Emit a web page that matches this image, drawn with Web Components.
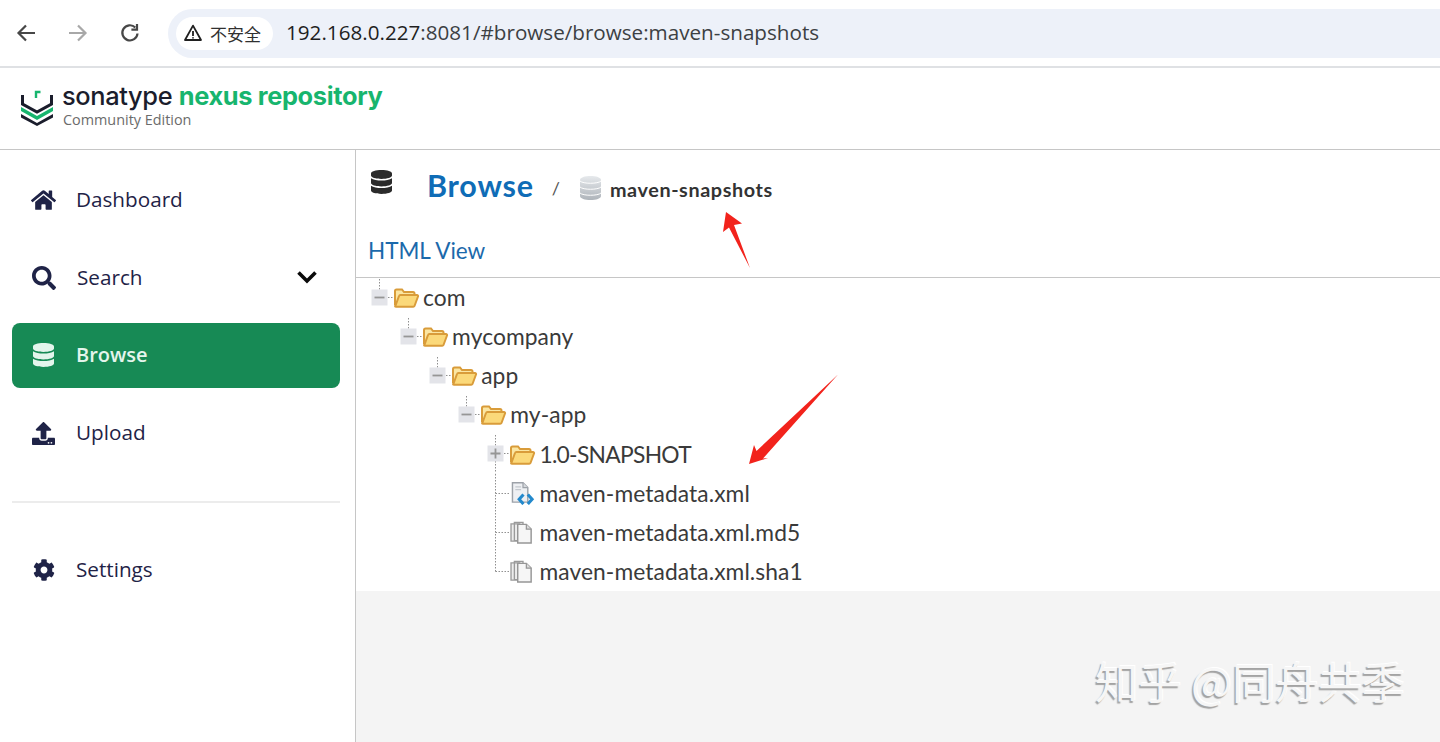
<!DOCTYPE html>
<html lang="zh">
<head>
<meta charset="utf-8">
<title>Nexus Repository</title>
<style>
  html, body { margin: 0; height: 742px; overflow: hidden; background: #fff; }
  app-shell { height: 742px; }
</style>
</head>
<body>
<app-shell>
  <browser-bar slot="top" url-host="192.168.0.227" url-rest=":8081/#browse/browse:maven-snapshots"></browser-bar>
  <app-header slot="top"></app-header>
  <side-nav slot="side">
    <nav-item icon="home" style="--ix:31px;--iw:25px">Dashboard</nav-item>
    <nav-item icon="search" caret style="--ix:32px;--iw:24px;--tx:77px">Search</nav-item>
    <nav-item icon="database" active style="--ix:33px;--iw:21px">Browse</nav-item>
    <nav-item icon="upload" style="--ix:32px;--iw:23px">Upload</nav-item>
    <hr-line></hr-line>
    <nav-item icon="cog" style="--ix:33px;--iw:22px">Settings</nav-item>
  </side-nav>
  <browse-pane slot="main">
    <browse-head repo="maven-snapshots"></browse-head>
    <tree-view>
      <tree-row level="0" kind="open">com</tree-row>
      <tree-row level="1" kind="open">mycompany</tree-row>
      <tree-row level="2" kind="open">app</tree-row>
      <tree-row level="3" kind="open">my-app</tree-row>
      <tree-row level="4" kind="closed" style="letter-spacing:-0.7px">1.0-SNAPSHOT</tree-row>
      <tree-row level="4" kind="leaf" file="xml">maven-metadata.xml</tree-row>
      <tree-row level="4" kind="leaf" file="hash">maven-metadata.xml.md5</tree-row>
      <tree-row level="4" kind="last" file="hash">maven-metadata.xml.sha1</tree-row>
    </tree-view>
  </browse-pane>
  <red-arrows slot="over"></red-arrows>
  <water-mark slot="over">知乎 @同舟共季</water-mark>
</app-shell>

<script>
const ICONS = {
  home: ['0 0 576 512', 'M280.37 148.26L96 300.11V464a16 16 0 0 0 16 16l112.06-.29a16 16 0 0 0 15.92-16V368a16 16 0 0 1 16-16h64a16 16 0 0 1 16 16v95.64a16 16 0 0 0 16 16.05L464 480a16 16 0 0 0 16-16V300L295.67 148.26a12.19 12.19 0 0 0-15.3 0zM571.6 251.47L488 182.56V44.05a12 12 0 0 0-12-12h-56a12 12 0 0 0-12 12v72.61L318.47 43a48 48 0 0 0-61 0L4.34 251.47a12 12 0 0 0-1.6 16.9l25.5 31A12 12 0 0 0 45.15 301l235.22-193.74a12.19 12.19 0 0 1 15.3 0L530.9 301a12 12 0 0 0 16.9-1.6l25.5-31a12 12 0 0 0-1.7-16.93z'],
  search: ['0 0 512 512', 'M505 442.7L405.3 343c-4.5-4.5-10.6-7-17-7H372c27.6-35.3 44-79.7 44-128C416 93.1 322.9 0 208 0S0 93.1 0 208s93.1 208 208 208c48.3 0 92.7-16.4 128-44v16.3c0 6.4 2.5 12.5 7 17l99.7 99.7c9.4 9.4 24.6 9.4 33.9 0l28.3-28.3c9.4-9.4 9.4-24.6.1-34zM208 336c-70.7 0-128-57.2-128-128 0-70.7 57.2-128 128-128 70.7 0 128 57.2 128 128 0 70.7-57.2 128-128 128z'],
  database: ['0 0 448 512', 'M448 73.143v45.714C448 159.143 347.667 192 224 192S0 159.143 0 118.857V73.143C0 32.857 100.333 0 224 0s224 32.857 224 73.143zM448 176v102.857C448 319.143 347.667 352 224 352S0 319.143 0 278.857V176c48.125 33.143 136.208 48.572 224 48.572S399.874 209.143 448 176zm0 160v102.857C448 479.143 347.667 512 224 512S0 479.143 0 438.857V336c48.125 33.143 136.208 48.572 224 48.572S399.874 369.143 448 336z'],
  upload: ['0 0 512 512', 'M296 384h-80c-13.3 0-24-10.7-24-24V192h-87.7c-17.8 0-26.7-21.5-14.1-34.1L242.3 5.7c7.5-7.5 19.8-7.5 27.3 0l152.2 152.2c12.6 12.6 3.7 34.1-14.1 34.1H320v168c0 13.3-10.7 24-24 24zm216-8v112c0 13.3-10.7 24-24 24H24c-13.3 0-24-10.7-24-24V376c0-13.3 10.7-24 24-24h136v8c0 30.9 25.1 56 56 56h80c30.9 0 56-25.1 56-56v-8h136c13.3 0 24 10.7 24 24zm-124 88c0-11-9-20-20-20s-20 9-20 20 9 20 20 20 20-9 20-20zm64 0c0-11-9-20-20-20s-20 9-20 20 9 20 20 20 20-9 20-20z'],
  cog: ['0 0 512 512', 'M487.4 315.7l-42.6-24.6c4.3-23.2 4.3-47 0-70.2l42.6-24.6c4.9-2.8 7.1-8.6 5.5-14-11.1-35.6-30-67.8-54.7-94.6-3.8-4.1-10-5.1-14.8-2.3L380.8 110c-17.9-15.4-38.5-27.3-60.8-35.1V25.8c0-5.6-3.9-10.5-9.4-11.7-36.7-8.2-74.3-7.8-109.2 0-5.5 1.2-9.4 6.1-9.4 11.7V75c-22.2 7.9-42.8 19.8-60.8 35.1L88.7 85.5c-4.9-2.8-11-1.9-14.8 2.3-24.7 26.7-43.6 58.9-54.7 94.6-1.7 5.4.6 11.2 5.5 14L67.3 221c-4.3 23.2-4.3 47 0 70.2l-42.6 24.6c-4.9 2.8-7.1 8.6-5.5 14 11.1 35.6 30 67.8 54.7 94.6 3.8 4.1 10 5.1 14.8 2.3l42.6-24.6c17.9 15.4 38.5 27.3 60.8 35.1v49.2c0 5.6 3.9 10.5 9.4 11.7 36.7 8.2 74.3 7.8 109.2 0 5.5-1.2 9.4-6.1 9.4-11.7v-49.2c22.2-7.9 42.8-19.8 60.8-35.1l42.6 24.6c4.9 2.8 11 1.9 14.8-2.3 24.7-26.7 43.6-58.9 54.7-94.6 1.5-5.5-.7-11.3-5.6-14.1zM256 336c-44.1 0-80-35.9-80-80s35.9-80 80-80 80 35.9 80 80-35.9 80-80 80z']
};
function faIcon(name) {
  const [box, d] = ICONS[name];
  return `<svg viewBox="${box}" fill="currentColor"><path d="${d}"/></svg>`;
}

// small helper, every element below is just a template in a shadow root
function define(tag, html, onConnect) {
  customElements.define(tag, class extends HTMLElement {
    constructor() {
      super();
      this.attachShadow({mode: 'open'});
    }
    connectedCallback() {
      this.shadowRoot.innerHTML = typeof html === 'function' ? html(this) : html;
      if (onConnect) onConnect(this);
    }
  });
}

define('app-shell', `
  <style>
    :host { display: grid; grid-template-columns: 356px 1fr; grid-template-rows: auto 1fr; position: relative; overflow: hidden; }
    .top { grid-column: 1 / 3; display: block; }
  </style>
  <div class="top"><slot name="top"></slot></div>
  <slot name="side"></slot>
  <slot name="main"></slot>
  <slot name="over"></slot>
`);

define('browser-bar', el => `
  <style>
    :host { display: flex; align-items: center; height: 66px; border-bottom: 2px solid #dfe1e4; background: #fff; padding-left: 15px; }
    svg.nav { width: 22px; height: 22px; fill: none; stroke: #474747; stroke-width: 2.200; margin-right: 30px; flex: none; margin-top: -1px; }
    svg.fwd { stroke: #a8a8a8; }
    svg.rel { margin-right: 27px; }
    .omni { flex: 1; height: 49px; background: #edf1f9; border-radius: 25px 0 0 25px; display: flex; align-items: center; padding-left: 8px; }
    .chip { display: flex; align-items: center; height: 33px; width: 97px; box-sizing: border-box; padding-left: 7px; background: #fff; border-radius: 17px; font: 17px "Noto Sans CJK SC", sans-serif; color: #303030; }
    .chip svg { width: 20px; height: 20px; margin-right: 7px; }
    .url { margin-left: 13px; margin-bottom: 2px; font: 20.650px "Open Sans", sans-serif; color: #3c4043; white-space: nowrap; }
    .url b { font-weight: 400; color: #1f1f1f; }
  </style>
  <svg class="nav" viewBox="0 0 22 22"><path d="M20 11H4M11 3.500 3.500 11l7.500 7.500"/></svg>
  <svg class="nav fwd" viewBox="0 0 22 22"><path d="M2 11h16M11 3.500l7.500 7.500-7.500 7.500"/></svg>
  <svg class="nav rel" viewBox="0 0 22 22"><path d="M18.500 11.500a7.600 7.600 0 1 1-2.200-6"/><path d="M18 2v5.600h-5.600" /></svg>
  <div class="omni">
    <div class="chip">
      <svg viewBox="0 0 20 20" fill="none" stroke="#1f1f1f" stroke-width="1.800"><path d="M10 2.600 18 17H2z" stroke-linejoin="round"/><path d="M10 8v5M10 14.200v1.400"/></svg>
      不安全
    </div>
    <span class="url"><b>${el.getAttribute('url-host')}</b>${el.getAttribute('url-rest')}</span>
  </div>
`);

define('app-header', `
  <style>
    :host { display: flex; align-items: flex-start; height: 81px; border-bottom: 1px solid #c6c6c6; padding-left: 21px; box-sizing: content-box; background: #fff; }
    svg { width: 32px; height: 36px; margin-top: 22px; flex: none; }
    .txt { margin-left: 9px; margin-top: 11px; }
    .name { font: 500 25.400px/34px Inter, sans-serif; letter-spacing: -0.350px; color: #1b1d2c; white-space: nowrap; }
    .name span { color: #17b56e; font-weight: 700; }
    .ed { font: 14.400px/16px "Open Sans", sans-serif; color: #6b6b6b; margin-left: 1px; margin-top: -1px; }
  </style>
  <svg viewBox="0 0 32 36">
    <path d="M1.500 5v9l14.500 8 14.500-8V5" fill="none" stroke="#1b1d2c" stroke-width="3"/>
    <path d="M0 17 16 26 32 17v4L16 30 0 21z" fill="#17b56e"/>
    <path d="M0 24 16 33 32 24v3.500L16 36 0 27.500z" fill="#1b1d2c"/>
    <path d="M15 8V2h4.500" fill="none" stroke="#17b56e" stroke-width="2.400"/>
  </svg>
  <div class="txt">
    <div class="name">sonatype <span>nexus repository</span></div>
    <div class="ed">Community Edition</div>
  </div>
`);

define('side-nav', `
  <style>
    :host { display: flex; flex-direction: column; gap: 12.700px; width: 356px; height: 592px; box-sizing: border-box; padding: 17.500px 15px 0 12px; border-right: 1px solid #c6c6c6; background: #fff; }
  </style>
  <slot></slot>
`);

define('hr-line', `
  <style>
    :host { display: block; height: 2px; background: #ececec; margin: 23px 0 21.500px; }
  </style>
`);

define('nav-item', el => `
  <style>
    :host { display: flex; align-items: center; height: 65px; flex: none; position: relative; border-radius: 8px; color: #1f2347; font: 20.700px "Open Sans", sans-serif; }
    :host([active]) { background: #178a55; color: #e4f5ec; font-weight: 600; font-size: 20px; }
    .ico { display: flex; justify-content: center; flex: none; width: var(--iw); margin-left: calc(var(--ix) - 12px); }
    svg { display: block; width: 100%; }
    .lbl { position: absolute; left: calc(var(--tx, 76px) - 12px); top: 50%; transform: translateY(calc(-50% - 1px)); white-space: nowrap; }
    .caret { position: absolute; left: 285px; top: 25px; width: 20px; height: 14px; fill: none; stroke: #0b0b0b; stroke-width: 3.600; }
  </style>
  <span class="ico">${faIcon(el.getAttribute('icon'))}</span>
  <span class="lbl"><slot></slot></span>
  ${el.hasAttribute('caret') ? '<svg class="caret" viewBox="0 0 20 14"><path d="M1.500 2.500 10 11 18.500 2.500"/></svg>' : ''}
`);

define('browse-pane', `
  <style>
    :host { display: flex; flex-direction: column; height: 592px; background: #f4f4f4; }
  </style>
  <slot></slot>
`);

define('browse-head', el => `
  <style>
    :host { display: block; height: 127px; background: #fff; border-bottom: 1px solid #c6c6c6; position: relative; }
    .row { display: flex; align-items: flex-start; height: 85.500px; }
    .db { width: 21px; margin: 20px 0 0 15px; color: #2b2b2b; flex: none; }
    .db svg { display: block; }
    h1 { margin: 15px 0 0 35px; font: 700 30.500px/40px Lato, sans-serif; letter-spacing: 0.800px; color: #0f6cb6; }
    .sep { margin: 24px 0 0 18px; font: 18px/28px Lato, sans-serif; color: #555; }
    .cyl { width: 21px; height: 24px; margin: 26px 0 0 20px; flex: none; }
    .repo { margin: 25px 0 0 9px; font: 700 19.800px/28px Lato, sans-serif; letter-spacing: 0.600px; color: #333; }
    a { display: block; margin: 0 0 0 12px; font: 22.500px/30px Lato, sans-serif; color: #1b69ab; text-decoration: none; }
  </style>
  <div class="row">
    <span class="db">${faIcon('database')}</span>
    <h1>Browse</h1>
    <span class="sep">/</span>
    <svg class="cyl" viewBox="0 0 21 24">
      <defs><linearGradient id="g" x1="0" x2="0" y1="0" y2="1"><stop offset="0" stop-color="#e6e9ec"/><stop offset="1" stop-color="#aeb4ba"/></linearGradient></defs>
      <path d="M0 4C0 1.500 5 0 10.500 0S21 1.500 21 4v16c0 2.500-5 4-10.500 4S0 22.500 0 20z" fill="url(#g)"/>
      <path d="M0 5c3 3 18 3 21 0M0 11c3 3 18 3 21 0M0 17c3 3 18 3 21 0" fill="none" stroke="#fff" stroke-width="1"/>
    </svg>
    <span class="repo">${el.getAttribute('repo')}</span>
  </div>
  <a>HTML View</a>
`);

define('tree-view', `
  <style>
    :host { display: block; background: #fff; height: 313px; }
  </style>
  <slot></slot>
`);

const FOLDER = `<svg class="ic" viewBox="1 0 26 22">
  <path d="M2 19V4.500C2 3.500 2.600 3 3.500 3h5.500l2 2.500h9c.8 0 1.500.6 1.500 1.500v3" fill="#fbe6a2" stroke="#d99c3a" stroke-width="2"/>
  <path d="M2.200 20 6 9.500c.2-.6.700-1 1.400-1H24c.8 0 1.300.8 1 1.500L21.500 19.500c-.2.500-.7.800-1.300.8H3z" fill="#fbd97a" stroke="#d99c3a" stroke-width="2"/>
</svg>`;

const FILES = {
  xml: `<svg class="ic" viewBox="1 0 26 24">
    <path d="M3 .8h11l5 5V21H3z" fill="#eef0f3" stroke="#9da2a9" stroke-width="1.500"/>
    <path d="M14 .8v5h5" fill="#d6dade" stroke="#9da2a9" stroke-width="1.300"/>
    <path d="M6 5h6M6 8h6" stroke="#c3c8ce" stroke-width="1.300"/>
    <path d="M14.500 13 10 18l4.500 5M19 13l4.500 5-4.500 5" fill="none" stroke="#2389cc" stroke-width="3.200"/>
  </svg>`,
  hash: `<svg class="ic" viewBox="1 0 26 24">
    <path d="M1.500 3h9v18h-9zM5 1.500h9v19H5z" fill="#ededed" stroke="#9a9a9a" stroke-width="1.400"/>
    <path d="M8.500 3.500h9l5 5V23h-14z" fill="#f6f6f6" stroke="#969696" stroke-width="1.500"/>
    <path d="M17.500 3.500v5h5" fill="#dcdcdc" stroke="#969696" stroke-width="1.300"/>
  </svg>`
};

function gutter(kind) {
  const dot = 'stroke="#8f8f8f" stroke-width="1" stroke-dasharray="1.500 1.500" fill="none"';
  if (kind === 'leaf' || kind === 'last') {
    const end = kind === 'last' ? 19.500 : 39.200;
    return `<svg class="gut" viewBox="0 0 24 39.200">
      <path d="M9.500 0V${end}M9.500 19.500H23" ${dot}/></svg>`;
  }
  const mark = kind === 'closed' ? 'M4.500 19.500h10M9.500 14.500v10' : 'M4.500 19.500h10';
  return `<svg class="gut" viewBox="0 0 24 39.200">
    <path d="M9.500 1V12M18 19.500H23${kind === 'closed' ? 'M9.500 27V39.200' : ''}" ${dot}/>
    <rect x="1.500" y="11.500" width="16" height="16" fill="#e3e4e9"/>
    <path d="${mark}" stroke="#969696" stroke-width="1.800" fill="none"/></svg>`;
}

define('tree-row', el => `
  <style>
    :host { display: flex; align-items: center; height: 39.125px; padding-left: calc(14px + 29.1px * var(--lv)); --lv: ${el.getAttribute('level')}; color: #3a3a3a; font: 22.800px Lato, sans-serif; letter-spacing: 0.080px; white-space: nowrap; }
    .gut { width: 24px; height: 39.200px; flex: none; overflow: visible; }
    .ic { width: 26px; height: 23px; flex: none; margin-right: 3px; }
    .txt { margin-bottom: 1px; }
  </style>
  ${gutter(el.getAttribute('kind'))}
  ${el.hasAttribute('file') ? FILES[el.getAttribute('file')] : FOLDER}
  <span class="txt"><slot></slot></span>
`);

define('red-arrows', `
  <style>
    :host { position: absolute; left: 0; top: 0; width: 1440px; height: 742px; pointer-events: none; }
    svg { display: block; width: 100%; height: 100%; }
  </style>
  <svg viewBox="0 0 1440 742">
    <path d="M726 212 742 223.500 734 225 750 268 729 227.500 723 232z" fill="#f2231c"/>
    <path d="M749 464 754 445 756.500 451 838 374.500 763 458.500 768 458z" fill="#f2231c"/>
  </svg>
`);

define('water-mark', `
  <style>
    :host { position: absolute; left: 1095px; top: 649px; font: 400 43.200px/62px "Noto Sans CJK SC", sans-serif; color: #f6f6f6; text-shadow: -1.500px 1.500px 1px #a3a3a3, 1px -1px 0 #fff; white-space: nowrap; }
  </style>
  <slot></slot>
`);
</script>
</body>
</html>
